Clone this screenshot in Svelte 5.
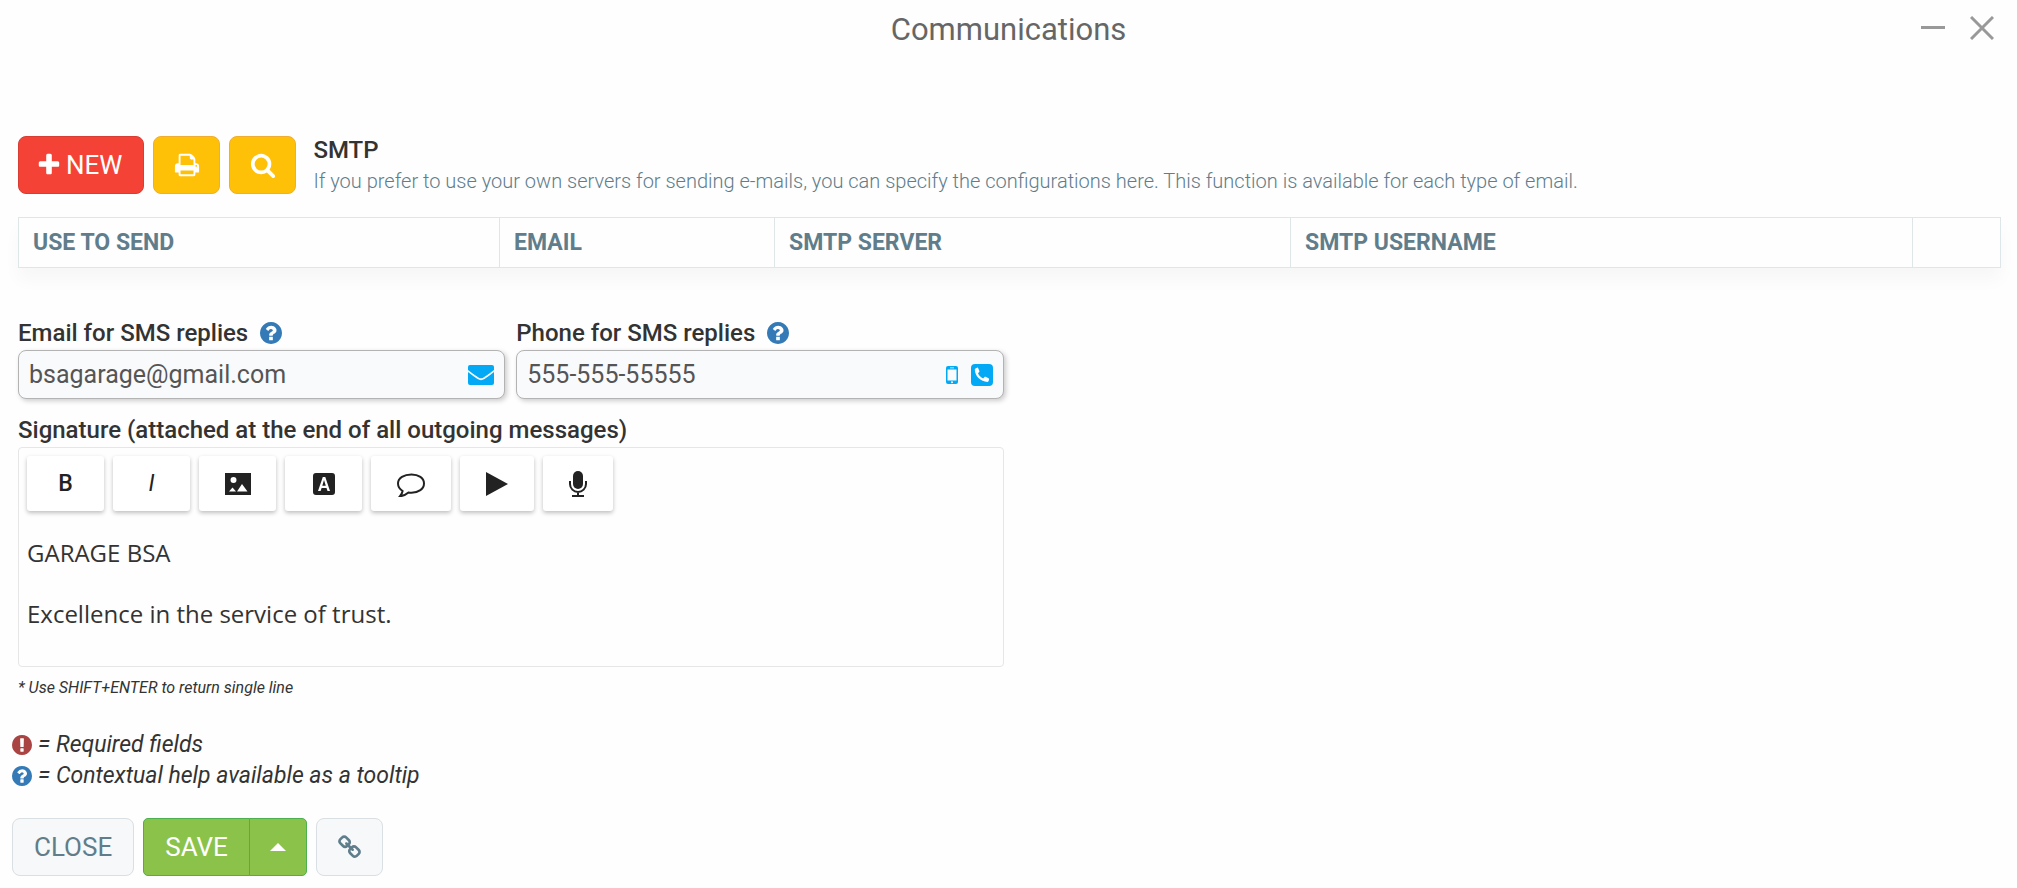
<script lang="ts">
	const full = '0 0 1792 1792';
	const circle = '128 128 1536 1536';

	const icons: Record<string, { box: string; path: string }> = {
		plus: { box: full, path: 'M1600 736v192q0 40-28 68t-68 28h-416v416q0 40-28 68t-68 28h-192q-40 0-68-28t-28-68v-416h-416q-40 0-68-28t-28-68v-192q0-40 28-68t68-28h416v-416q0-40 28-68t68-28h192q40 0 68 28t28 68v416h416q40 0 68 28t28 68z' },
		print: { box: full, path: 'M448 1536h896v-256h-896v256zm0-640h896v-384h-160q-40 0-68-28t-28-68v-160h-640v640zm1152 64q0-26-19-45t-45-19-45 19-19 45 19 45 45 19 45-19 19-45zm128 0v416q0 13-9.5 22.5t-22.5 9.5h-224v160q0 40-28 68t-68 28h-960q-40 0-68-28t-28-68v-160h-224q-13 0-22.5-9.5t-9.5-22.5v-416q0-79 56.5-135.5t135.5-56.5h64v-544q0-40 28-68t68-28h672q40 0 88 20t76 48l152 152q28 28 48 76t20 88v256h64q79 0 135.5 56.5t56.5 135.5z' },
		search: { box: full, path: 'M1216 832q0-185-131.5-316.5t-316.5-131.5-316.5 131.5-131.5 316.5 131.5 316.5 316.5 131.5 316.5-131.5 131.5-316.5zm512 832q0 52-38 90t-90 38q-54 0-90-38l-343-342q-179 124-399 124-143 0-273.5-55.5t-225-150-150-225-55.5-273.5 55.5-273.5 150-225 225-150 273.5-55.5 273.5 55.5 225 150 150 225 55.5 273.5q0 220-124 399l343 343q37 37 37 90z' },
		help: { box: circle, path: 'M1024 1376v-192q0-14-9-23t-23-9h-192q-14 0-23 9t-9 23v192q0 14 9 23t23 9h192q14 0 23-9t9-23zm256-672q0-88-55.5-163t-138.5-116-170-41q-243 0-371 213-15 24 8 42l132 100q7 6 19 6 16 0 25-12 53-68 86-92 34-24 86-24 48 0 85.5 26t37.5 59q0 38-20 61t-68 45q-63 28-115.5 86.5t-52.5 125.5v36q0 14 9 23t23 9h192q14 0 23-9t9-23q0-19 21.5-49.5t54.5-49.5q32-18 49-28.5t46-35 44.5-48 28-60.5 12.5-81zm384 192q0 209-103 385.5t-279.5 279.5-385.5 103-385.5-103-279.5-279.5-103-385.5 103-385.5 279.5-279.5 385.5-103 385.5 103 279.5 279.5 103 385.5z' },
		required: { box: circle, path: 'M896 128q209 0 385.5 103t279.5 279.5 103 385.5-103 385.5-279.5 279.5-385.5 103-385.5-103-279.5-279.5-103-385.5 103-385.5 279.5-279.5 385.5-103zm128 1247v-190q0-14-9-23.5t-22-9.5h-192q-13 0-23 10t-10 23v190q0 13 10 23t23 10h192q13 0 22-9.5t9-23.5zm-2-344l18-621q0-12-10-18-10-8-24-8h-220q-14 0-24 8-10 6-10 18l17 621q0 10 10 17.5t24 7.5h185q14 0 23.5-7.5t10.5-17.5z' },
		link: { box: full, path: 'M1520 1216q0-40-28-68l-208-208q-28-28-68-28-42 0-72 32 3 3 19 18.5t21.5 21.5 15 19 13 25.5 3.5 27.5q0 40-28 68t-68 28q-15 0-27.5-3.5t-25.5-13-19-15-21.5-21.5-18.5-19q-33 31-33 73 0 40 28 68l206 207q27 27 68 27 40 0 68-26l147-146q28-28 28-67zm-703-705q0-40-28-68l-206-207q-28-28-68-28-39 0-68 27l-147 146q-28 28-28 67 0 40 28 68l208 208q27 27 68 27 42 0 72-31-3-3-19-18.5t-21.5-21.5-15-19-13-25.5-3.5-27.5q0-40 28-68t68-28q15 0 27.5 3.5t25.5 13 19 15 21.5 21.5 18.5 19q33-31 33-73zm895 705q0 120-85 203l-147 146q-83 83-203 83-121 0-204-85l-206-207q-83-83-83-203 0-123 88-209l-88-88q-86 88-208 88-120 0-204-84l-208-208q-84-84-84-204t85-203l147-146q83-83 203-83 121 0 204 85l206 207q83 83 83 203 0 123-88 209l88 88q86-88 208-88 120 0 204 84l208 208q84 84 84 204z' }
	};

	const columns = [
		{ label: 'USE TO SEND', width: 481 },
		{ label: 'EMAIL', width: 275 },
		{ label: 'SMTP SERVER', width: 516 },
		{ label: 'SMTP USERNAME', width: 622 },
		{ label: '', width: 88 }
	];
	const tableWidth = columns.reduce((sum, c) => sum + c.width, 0);

	let email = $state('bsagarage@gmail.com');
	let phone = $state('555-555-55555');
</script>

{#snippet icon(name: string, size: number)}
	<svg width={size} height={size} viewBox={icons[name].box} aria-hidden="true">
		<path d={icons[name].path} />
	</svg>
{/snippet}

<div class="window">
	<header class="titlebar">
		<h1>Communications</h1>
		<div class="window-controls">
			<button aria-label="Minimize">
				<svg width="24" height="24" viewBox="0 0 24 24"><path d="M0 11.5h24" /></svg>
			</button>
			<button aria-label="Close window">
				<svg width="24" height="24" viewBox="0 0 24 24"><path d="M1 1l22 22M23 1L1 23" /></svg>
			</button>
		</div>
	</header>

	<main>
		<div class="actions">
			<button class="btn btn-red">{@render icon('plus', 26)}NEW</button>
			<button class="btn btn-amber btn-icon" aria-label="Print">{@render icon('print', 26)}</button>
			<button class="btn btn-amber btn-icon" aria-label="Search">{@render icon('search', 26)}</button>
			<div class="intro">
				<h2>SMTP</h2>
				<p>If you prefer to use your own servers for sending e-mails, you can specify the configurations here. This function is available for each type of email.</p>
			</div>
		</div>

		<table>
			<thead>
				<tr>
					{#each columns as column}
						<th style="width: {(column.width / tableWidth) * 100}%">{column.label}</th>
					{/each}
				</tr>
			</thead>
		</table>

		<div class="form">
			<div class="fields">
				<div class="field">
					<label for="email">Email for SMS replies {@render icon('help', 22)}</label>
					<div class="control">
						<input id="email" type="email" bind:value={email} />
						<svg width="26" height="20" viewBox="0 0 26 20" aria-hidden="true">
							<path d="M2 0h22a2 2 0 0 1 2 2v3q-5 4-10.500 7.500-2.500 1.700-5 0Q5 9 0 5V2a2 2 0 0 1 2-2zM0 7q5 4 9.500 7 3.500 2.300 7 0Q21 11 26 7v11a2 2 0 0 1-2 2H2a2 2 0 0 1-2-2z" />
						</svg>
					</div>
				</div>
				<div class="field">
					<label for="phone">Phone for SMS replies {@render icon('help', 22)}</label>
					<div class="control">
						<input id="phone" type="tel" bind:value={phone} />
						<svg width="12" height="18" viewBox="0 0 12 18" aria-hidden="true">
							<path fill-rule="evenodd" d="M2 0h8a2 2 0 0 1 2 2v14a2 2 0 0 1-2 2H2a2 2 0 0 1-2-2V2a2 2 0 0 1 2-2zM1.500 3.500v11h9v-11zM4 1.500v.8h4v-.8zM6 15.200a1 1 0 1 0 0 2 1 1 0 0 0 0-2z" />
						</svg>
						<svg width="22" height="22" viewBox="0 0 22 22" aria-hidden="true">
							<rect width="22" height="22" rx="4" />
							<path class="handset" d="M4.500 4.500l1.500-.8c.6-.2 1 0 1.200.5l1.200 2.800c.2.400 0 .8-.3 1.100L7 9.200c1 2.300 2.700 4.200 5.200 5.300l1.300-1.500c.3-.3.7-.4 1.100-.2l2.900 1.400c.5.2.7.6.6 1.100l-.5 1.800c-.1.500-.5.8-1 .8C9.500 17.900 3.800 12 3.800 5.600c0-.5.3-.9.7-1.100z" />
						</svg>
					</div>
				</div>
			</div>

			<div class="label" id="signature-label">Signature (attached at the end of all outgoing messages)</div>
			<div class="editor">
				<div class="toolbar">
					<button class="tool" aria-label="Bold"><b>B</b></button>
					<button class="tool" aria-label="Italic"><i>I</i></button>
					<button class="tool" aria-label="Image">
						<svg width="26" height="22" viewBox="0 0 26 22">
							<path fill-rule="evenodd" d="M0 0h26v22H0zM8.500 4a3 3 0 1 0 0 6 3 3 0 0 0 0-6zM4 18.500h7L7.500 14.500zM12 18.500h10.500L17 11z" />
						</svg>
					</button>
					<button class="tool" aria-label="Text color">
						<svg width="22" height="22" viewBox="0 0 22 22">
							<path fill-rule="evenodd" d="M3 0h16a3 3 0 0 1 3 3v16a3 3 0 0 1-3 3H3a3 3 0 0 1-3-3V3a3 3 0 0 1 3-3zM9.800 4L5 18h2.600l1-3h4.900l1 3H17L12.300 4zM11 7l1.800 5.800H9.300z" />
						</svg>
					</button>
					<button class="tool tool-wide" aria-label="Comment">
						<svg width="28" height="26" viewBox="0 0 28 26">
							<path class="outline" d="M14.500 3.500C21.500 3.500 27 7 27 12.500s-5.500 9.200-12.500 9.200c-1 0-2 0-3-.2C9 23.600 6.500 25 3 25.200c1.300-1.600 2.300-3.400 2.600-5.200C2.800 18.200 1 15.700 1 12.500c0-5.500 6-9 13.500-9z" />
						</svg>
					</button>
					<button class="tool tool-mid" aria-label="Video">
						<svg width="22" height="24" viewBox="0 0 22 24"><path d="M0 0l22 12L0 24z" /></svg>
					</button>
					<button class="tool tool-slim" aria-label="Dictate">
						<svg width="18" height="26" viewBox="0 0 18 26">
							<rect x="4" y="0" width="10" height="18" rx="5" />
							<path class="outline" d="M1 10v3a8 8 0 0 0 16 0v-3M9 21v4M3 25h12" />
						</svg>
					</button>
				</div>
				<div class="content" contenteditable="true" role="textbox" tabindex="0" aria-multiline="true" aria-labelledby="signature-label">
					<p>GARAGE BSA</p>
					<p>Excellence in the service of trust.</p>
				</div>
			</div>
			<p class="hint">* Use SHIFT+ENTER to return single line</p>
		</div>
	</main>

	<footer>
		<p class="legend"><span class="danger">{@render icon('required', 20)}</span> = Required fields</p>
		<p class="legend"><span class="info">{@render icon('help', 20)}</span> = Contextual help available as a tooltip</p>
		<div class="buttons">
			<button class="btn btn-light">CLOSE</button>
			<div class="split">
				<button class="btn btn-green">SAVE</button>
				<button class="btn btn-green btn-caret" aria-label="More save options"><span class="caret"></span></button>
			</div>
			<button class="btn btn-light btn-icon" aria-label="Copy link">{@render icon('link', 25)}</button>
		</div>
	</footer>
</div>

<style>
	:global(body) {
		margin: 0;
		background: #fefefe;
	}

	.window {
		font-family: Roboto, 'Liberation Sans', sans-serif;
		font-size: 24px;
		color: #333;
	}

	button,
	input {
		font-family: inherit;
	}

	button {
		cursor: pointer;
	}

	h1,
	h2,
	p {
		margin: 0;
		font-weight: 400;
	}

	svg {
		fill: currentColor;
		flex-shrink: 0;
	}

	.titlebar {
		display: grid;
		grid-template-columns: 1fr auto 1fr;
		align-items: center;
		height: 60px;
		padding: 0 23px;
	}

	.titlebar h1 {
		grid-column: 2;
		font-size: 31px;
		line-height: 60px;
		color: #666;
	}

	.window-controls {
		display: flex;
		justify-content: flex-end;
		gap: 25px;
		padding-bottom: 4px;
	}

	.window-controls button {
		display: flex;
		padding: 0;
		border: none;
		background: none;
		color: #999;
	}

	.window-controls svg {
		stroke: currentColor;
		stroke-width: 3;
	}

	main {
		padding: 74px 16px 0 18px;
	}

	.actions {
		display: flex;
		align-items: center;
		gap: 9px;
	}

	.btn {
		display: flex;
		align-items: center;
		justify-content: center;
		gap: 4px;
		height: 58px;
		padding: 0 21px;
		border: 1px solid;
		border-radius: 8px;
		font-size: 26px;
		white-space: nowrap;
	}

	.btn-icon {
		flex-shrink: 0;
		width: 67px;
		padding: 0;
	}

	.btn-red {
		padding: 0 21px 0 17px;
		background: #f44336;
		border-color: #d83c32;
		color: #fff;
	}

	.btn-amber {
		background: #ffc107;
		border-color: #f0ad2e;
		color: #fff;
	}

	.btn-light {
		background: #f6f8fa;
		border-color: #d9dfe3;
		color: #607d8b;
	}

	.btn-green {
		background: #8bc34a;
		border-color: #4caf50;
		color: #fff;
	}

	.intro {
		margin-left: 8px;
	}

	.intro h2 {
		font-size: 24px;
		line-height: 32px;
		font-weight: 500;
	}

	.intro p {
		font-size: 20px;
		line-height: 30px;
		font-weight: 300;
		color: #607d8b;
	}

	table {
		width: 100%;
		margin-top: 21px;
		border-collapse: collapse;
		table-layout: fixed;
		box-shadow: 0 12px 16px rgba(0, 0, 0, 0.03);
	}

	th {
		height: 50px;
		padding: 0 14px;
		border: 1px solid #dfe6e8;
		box-sizing: border-box;
		font-size: 23px;
		font-weight: 700;
		text-align: left;
		color: #607d8b;
	}

	.form {
		width: 50%;
		min-width: 640px;
		margin-top: 48px;
		padding-right: 6px;
		box-sizing: border-box;
	}

	.fields {
		display: flex;
		gap: 11px;
	}

	.field {
		flex: 1;
	}

	.field label,
	.label {
		display: flex;
		align-items: center;
		gap: 12px;
		height: 34px;
		font-weight: 500;
	}

	.field label svg {
		color: #337ab7;
	}

	.control {
		display: flex;
		align-items: center;
		gap: 13px;
		height: 47px;
		padding: 0 10px;
		border: 1px solid #b3b3b3;
		border-radius: 8px;
		background: #f9fafc;
		box-shadow: 2px 2px 5px rgba(0, 0, 0, 0.2);
		color: #03a9f4;
	}

	.control input {
		flex: 1;
		min-width: 0;
		padding: 0;
		border: none;
		outline: none;
		background: transparent;
		font-size: 25px;
		color: #555;
	}

	.handset {
		fill: #fff;
	}

	.label {
		margin-top: 14px;
	}

	.editor {
		padding: 8px;
		border: 1px solid #e6e6e6;
		border-radius: 4px;
	}

	.toolbar {
		display: flex;
		gap: 9px;
	}

	.tool {
		display: flex;
		align-items: center;
		justify-content: center;
		width: 77px;
		height: 55px;
		padding: 0;
		border: none;
		border-radius: 3px;
		background: #fff;
		box-shadow: 0 2px 4px rgba(0, 0, 0, 0.25);
		font-size: 23px;
		color: #222;
	}

	.tool b {
		font-weight: 500;
	}

	.tool-wide {
		width: 80px;
	}

	.tool-mid {
		width: 74px;
	}

	.tool-slim {
		width: 70px;
	}

	.outline {
		fill: none;
		stroke: currentColor;
		stroke-width: 2;
	}

	.content {
		padding: 26px 0 29px;
		outline: none;
		font-family: 'Trebuchet MS', 'Open Sans', sans-serif;
		line-height: 31px;
	}

	.content p {
		margin-bottom: 30px;
	}

	.content p:last-child {
		margin-bottom: 0;
	}

	.hint {
		margin-top: 10px;
		font-size: 16px;
		line-height: 22px;
		font-style: italic;
	}

	footer {
		padding: 30px 12px 12px;
	}

	.legend {
		display: flex;
		align-items: center;
		gap: 6px;
		font-size: 23px;
		line-height: 31px;
		font-style: italic;
	}

	.legend span {
		display: flex;
	}

	.danger {
		color: #a94442;
	}

	.info {
		color: #337ab7;
	}

	.buttons {
		display: flex;
		gap: 9px;
		margin-top: 27px;
	}

	.split {
		display: flex;
	}

	.split .btn:first-child {
		border-radius: 5px 0 0 5px;
	}

	.split .btn:last-child {
		margin-left: -1px;
		border-radius: 0 5px 5px 0;
	}

	.btn-caret {
		width: 58px;
		padding: 0;
	}

	.caret {
		border: 8px solid transparent;
		border-top: none;
		border-bottom: 8px solid #fff;
	}
</style>
